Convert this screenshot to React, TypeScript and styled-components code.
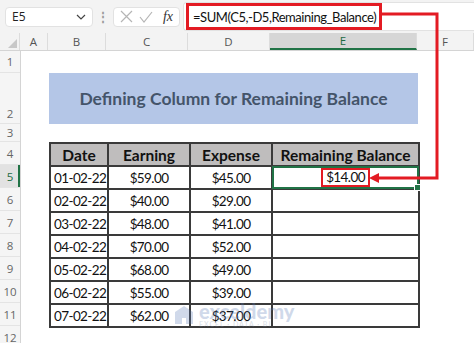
import { FC } from 'react'
import styled, { createGlobalStyle } from 'styled-components'

const GlobalStyle = createGlobalStyle`
  html, body {
    margin: 0;
    padding: 0;
    background: #ffffff;
  }
  body {
    font-family: 'Open Sans', 'Noto Sans', sans-serif;
  }
`

const Window = styled.div`
  position: relative;
  width: 474px;
  height: 343px;
  overflow: hidden;
  background: #ffffff;
`

const FormulaBar = styled.div`
  display: flex;
  align-items: center;
  height: 33px;
  padding-left: 5px;
  background: #f3f3f3;
  box-sizing: border-box;
`

const NameBox = styled.div`
  display: flex;
  align-items: center;
  justify-content: space-between;
  width: 88px;
  height: 20px;
  padding: 0 6px 0 6px;
  box-sizing: border-box;
  background: #ffffff;
  border: 1px solid #e2e2e2;
  border-radius: 4px;
  font-size: 12px;
  color: #222;
`

const Dots = styled.div`
  width: 20px;
  text-align: center;
  color: #9a9a9a;
  font-size: 12px;
  font-weight: 700;
  line-height: 1;
`

const FxBox = styled.div`
  display: flex;
  align-items: center;
  gap: 6px;
  width: 67px;
  height: 20px;
  padding: 0 6px;
  box-sizing: border-box;
  background: #ffffff;
  border: 1px solid #e2e2e2;
  border-radius: 4px;
`

const Fx = styled.span`
  margin-left: auto;
  font-family: 'Liberation Serif', serif;
  font-style: italic;
  font-size: 14px;
  color: #333;
`

const FormulaInput = styled.div`
  flex: 1;
  display: flex;
  align-items: center;
  height: 27px;
  margin-left: 3px;
  padding-left: 1px;
  background: #ffffff;
  border: 1px solid #e2e2e2;
  border-right: 0;
  border-radius: 4px 0 0 4px;
`

const Highlight = styled.div`
  display: flex;
  align-items: center;
  width: 196px;
  height: 27px;
  margin-left: 1px;
  padding-left: 4px;
  box-sizing: border-box;
  border: 3px solid #e31b23;
  font-family: 'Lato', sans-serif;
  font-size: 13px;
  letter-spacing: -0.45px;
  color: #111;
  white-space: nowrap;
`

const ColumnHeaders = styled.div`
  display: flex;
  height: 17px;
  background: #f3f3f3;
  border-bottom: 1px solid #d4d4d4;
`

const ColHead = styled.div<{ $w: number; $active?: boolean }>`
  flex: 0 0 ${(p) => p.$w}px;
  display: flex;
  align-items: center;
  justify-content: center;
  box-sizing: border-box;
  border-right: 1px solid #dcdcdc;
  font-size: 11.5px;
  color: ${(p) => (p.$active ? '#1e6b42' : '#555')};
  background: ${(p) => (p.$active ? '#d6d6d6' : 'transparent')};
  border-bottom: ${(p) => (p.$active ? '2px solid #217346' : '0')};
`

const Corner = styled(ColHead)`
  align-items: flex-end;
  justify-content: flex-end;
  padding: 0 2px 2px 0;
`

const Body = styled.div`
  display: flex;
`

const RowHeaders = styled.div`
  flex: 0 0 20px;
  display: flex;
  flex-direction: column;
  background: #f5f5f5;
  border-right: 1px solid #d4d4d4;
`

const RowHead = styled.div<{ $h: number; $active?: boolean; $bottom?: boolean }>`
  height: ${(p) => p.$h}px;
  display: flex;
  align-items: ${(p) => (p.$bottom ? 'flex-end' : 'center')};
  justify-content: center;
  padding-bottom: ${(p) => (p.$bottom ? '2px' : '0')};
  box-sizing: border-box;
  border-bottom: 1px solid #e4e4e4;
  font-size: 11.5px;
  color: ${(p) => (p.$active ? '#1e6b42' : '#666')};
  background: ${(p) => (p.$active ? '#e2e2e2' : 'transparent')};
  box-shadow: ${(p) => (p.$active ? 'inset -2px 0 0 #217346' : 'none')};
`

const Sheet = styled.div`
  flex: 1;
  display: flex;
  flex-direction: column;
  padding: 22px 0 0 28px;
`

const Title = styled.div`
  width: 369px;
  height: 51px;
  display: flex;
  align-items: center;
  justify-content: center;
  background: #b4c6e7;
  font-family: 'Lato', sans-serif;
  font-weight: 700;
  font-size: 17.5px;
  color: #44546a;
`

const Table = styled.table`
  margin-top: 18px;
  width: 369px;
  table-layout: fixed;
  border-collapse: collapse;
  font-family: 'Lato', sans-serif;
  font-size: 13.5px;
  letter-spacing: -0.6px;
  color: #111;
`

const Th = styled.th`
  height: 21px;
  padding: 0;
  background: #bfbdbd;
  border: 2px solid #3a3a3a;
  font-weight: 700;
  font-size: 15.5px;
  letter-spacing: 0;
  text-align: center;
  white-space: nowrap;
`

const Td = styled.td<{ $align?: 'left' | 'center' }>`
  position: relative;
  height: 21px;
  padding: 0 0 0 ${(p) => (p.$align === 'left' ? '3px' : '0')};
  border: 2px solid #3a3a3a;
  text-align: ${(p) => p.$align || 'center'};
  white-space: nowrap;
  overflow: visible;
`

const Selection = styled.div`
  position: absolute;
  inset: -1px;
  border: 2px solid #217346;
  pointer-events: none;

  &::after {
    content: '';
    position: absolute;
    right: -4px;
    bottom: -4px;
    width: 5px;
    height: 5px;
    background: #217346;
    border: 1px solid #fff;
  }
`

const ResultBox = styled.span`
  display: inline-block;
  padding: 0 3px;
  line-height: 15px;
  border: 2.5px solid #e31b23;
`

const Arrow = styled.svg`
  position: absolute;
  left: 0;
  top: 0;
  pointer-events: none;
`

const Watermark = styled.div`
  position: absolute;
  left: 173px;
  top: 302px;
  display: flex;
  align-items: center;
  gap: 4px;
  opacity: 0.28;
  pointer-events: none;
`

const WatermarkText = styled.div`
  display: flex;
  flex-direction: column;
  font-family: 'Lato', sans-serif;
  color: #5b7bb5;

  b {
    font-size: 20px;
    line-height: 18px;
    font-weight: 900;
  }
  small {
    font-size: 7px;
    letter-spacing: 1px;
    color: #7a8aa5;
  }
`

const columns = [
  { name: '', w: 20 },
  { name: 'A', w: 28 },
  { name: 'B', w: 58 },
  { name: 'C', w: 82 },
  { name: 'D', w: 82 },
  { name: 'E', w: 147 },
  { name: 'F', w: 57 },
]

const rowHeights = [22, 51, 18, 23, 23, 23, 23, 23, 23, 23, 23, 23]

const data = [
  ['01-02-22', '$59.00', '$45.00'],
  ['02-02-22', '$40.00', '$29.00'],
  ['03-02-22', '$48.00', '$41.00'],
  ['04-02-22', '$70.00', '$52.00'],
  ['05-02-22', '$68.00', '$49.00'],
  ['06-02-22', '$55.00', '$39.00'],
  ['07-02-22', '$62.00', '$37.00'],
]

const App: FC = () => {
  return (
    <Window>
      <GlobalStyle />
      <FormulaBar>
        <NameBox>
          <span>E5</span>
          <svg width="10" height="6" viewBox="0 0 10 6">
            <path d="M1 1l4 4 4-4" fill="none" stroke="#444" strokeWidth="1.2" />
          </svg>
        </NameBox>
        <Dots>⋮</Dots>
        <FxBox>
          <svg width="13" height="13" viewBox="0 0 13 13">
            <path d="M1 1l11 11M12 1L1 12" stroke="#b5b5b5" strokeWidth="1.2" />
          </svg>
          <svg width="14" height="12" viewBox="0 0 14 12">
            <path d="M1 6l4 5L13 1" fill="none" stroke="#b5b5b5" strokeWidth="1.2" />
          </svg>
          <Fx>fx</Fx>
        </FxBox>
        <FormulaInput>
          <Highlight>=SUM(C5,-D5,Remaining_Balance)</Highlight>
        </FormulaInput>
      </FormulaBar>

      <ColumnHeaders>
        {columns.map((c, i) =>
          i === 0 ? (
            <Corner key={i} $w={c.w}>
              <svg width="9" height="9" viewBox="0 0 9 9">
                <path d="M9 0V9H0z" fill="#c8c8c8" />
              </svg>
            </Corner>
          ) : (
            <ColHead key={i} $w={c.w} $active={c.name === 'E'}>
              {c.name}
            </ColHead>
          ),
        )}
      </ColumnHeaders>

      <Body>
        <RowHeaders>
          {rowHeights.map((h, i) => (
            <RowHead key={i} $h={h} $active={i === 4} $bottom={i === 1}>
              {i + 1}
            </RowHead>
          ))}
        </RowHeaders>
        <Sheet>
          <Title>Defining Column for Remaining Balance</Title>
          <Table>
            <colgroup>
              <col style={{ width: 58 }} />
              <col style={{ width: 82 }} />
              <col style={{ width: 82 }} />
              <col style={{ width: 147 }} />
            </colgroup>
            <thead>
              <tr>
                <Th>Date</Th>
                <Th>Earning</Th>
                <Th>Expense</Th>
                <Th>Remaining Balance</Th>
              </tr>
            </thead>
            <tbody>
              {data.map((row, i) => (
                <tr key={row[0]}>
                  <Td $align="left">{row[0]}</Td>
                  <Td>{row[1]}</Td>
                  <Td>{row[2]}</Td>
                  <Td>
                    {i === 0 && (
                      <>
                        <ResultBox>$14.00</ResultBox>
                        <Selection />
                      </>
                    )}
                  </Td>
                </tr>
              ))}
            </tbody>
          </Table>
        </Sheet>
      </Body>

      <Watermark>
        <svg width="22" height="20" viewBox="0 0 22 20">
          <path d="M11 1L2 7v12h7v-6h4v6h7V7z" fill="#5b7bb5" />
        </svg>
        <WatermarkText>
          <b>exceldemy</b>
          <small>EXCEL · DATA · BI</small>
        </WatermarkText>
      </Watermark>

      <Arrow width="474" height="343" viewBox="0 0 474 343">
        <path
          d="M382 14H437V178H378"
          fill="none"
          stroke="#e31b23"
          strokeWidth="3"
        />
        <path d="M369 178l10-5v10z" fill="#e31b23" />
      </Arrow>
    </Window>
  )
}

export default App
